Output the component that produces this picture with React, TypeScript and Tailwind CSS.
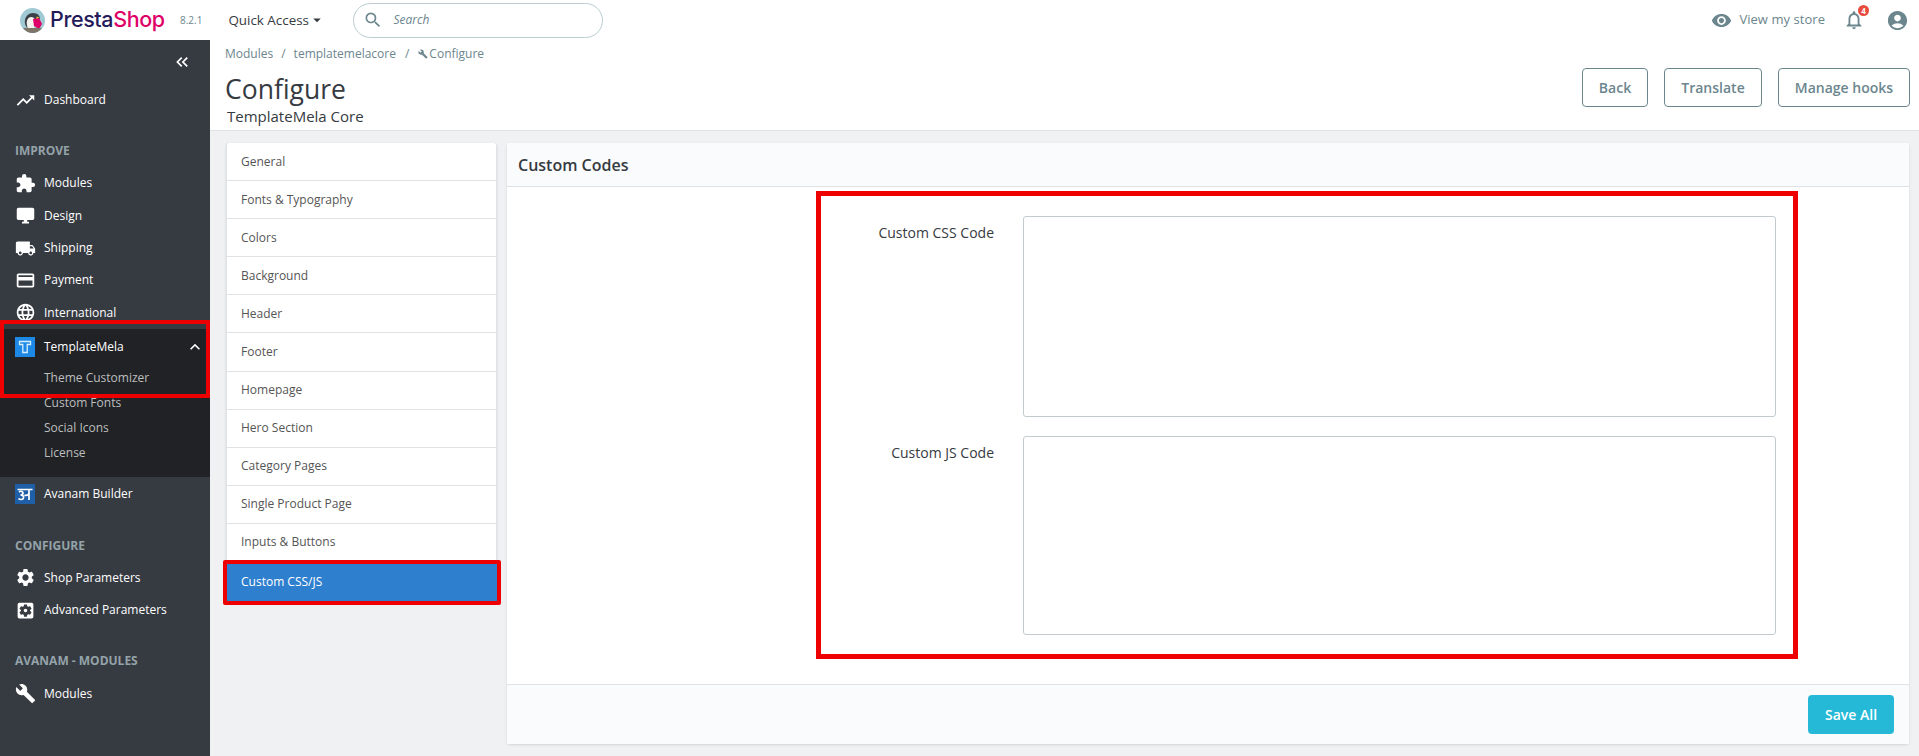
import {
  MdTrendingUp,
  MdExtension,
  MdDesktopWindows,
  MdLocalShipping,
  MdCreditCard,
  MdLanguage,
  MdKeyboardArrowUp,
  MdSettings,
  MdSettingsApplications,
  MdBuild,
  MdVisibility,
  MdNotificationsNone,
  MdAccountCircle,
  MdSearch,
  MdKeyboardDoubleArrowLeft,
  MdArrowDropDown,
} from "react-icons/md";
import type { ReactNode } from "react";

const font = { fontFamily: '"Open Sans", sans-serif' };

function NavItem({ icon, label }: { icon: ReactNode; label: string }) {
  return (
    <div className="flex h-[32.3px] items-center pl-[15px] text-[12px] text-white">
      <span className="flex w-[29px] shrink-0 items-center text-[21px] text-white">{icon}</span>
      {label}
    </div>
  );
}

function NavTitle({ label, className }: { label: string; className: string }) {
  return (
    <div className={`flex items-center pl-[15px] text-[12px] font-bold uppercase text-[#94a3a9] ${className}`}>
      {label}
    </div>
  );
}

function Logo() {
  return (
    <svg width="25" height="25" viewBox="0 0 25 25" className="shrink-0">
      <circle cx="12.5" cy="12.500" r="12.500" fill="#9fc9d3" />
      <path d="M5 16c-1-7 3-11 8-11s7 3 7 6l-4 2-3 9H8z" fill="#3b4048" />
      <path d="M7 17c-1-4 1-8 4-8s4 2 4 4l-1 10H8z" fill="#f4f2ee" />
      <path d="M13 11l6-1 3 6-3 5-5-3z" fill="#df0067" />
      <path d="M16.500 8.500l3 1-3 1.500z" fill="#f2b134" />
      <path d="M3 20h19c-2 3-6 5-9.500 5S5 23 3 20z" fill="#7d7568" />
    </svg>
  );
}

function Topbar() {
  return (
    <header className="flex h-10 items-center bg-white pl-5 pr-[10px]">
      <Logo />
      <div
        className="w-[126px] pl-[5px] text-[21.5px] font-medium leading-none tracking-[-0.4px]"
        style={{ fontFamily: '"Inter", sans-serif' }}
      >
        <span className="text-[#251b5b]">Presta</span>
        <span className="text-[#df0067]">Shop</span>
      </div>
      <span className="ml-[9px] text-[10px] text-[#6c868e]">8.2.1</span>
      <div className="ml-[26px] flex w-[125px] items-center text-[13.4px] text-[#363a41]">
        Quick Access
        <MdArrowDropDown className="-ml-[1px] text-[18px]" />
      </div>
      <div className="flex h-[35px] w-[250px] items-center rounded-full border border-[#bbcdd2] pl-[9px] text-[12px] italic text-[#6c868e]">
        <MdSearch className="text-[20px] text-[#6c868e]" />
        <span className="ml-[10px]">Search</span>
      </div>
      <div className="ml-auto flex items-center text-[#6c868e]">
        <MdVisibility className="text-[21px]" />
        <span className="ml-[7px] text-[13px] tracking-[0.05px]">View my store</span>
        <span className="relative ml-[18px] text-[22px]">
          <MdNotificationsNone />
          <span className="absolute -right-[4px] -top-[4px] flex h-[11px] w-[11px] items-center justify-center rounded-full bg-[#e74c3c] text-[8px] font-bold text-white">
            4
          </span>
        </span>
        <MdAccountCircle className="ml-[21px] text-[23px]" />
      </div>
    </header>
  );
}

function Sidebar() {
  return (
    <aside className="relative w-[210px] shrink-0 bg-[#363a41]">
      <div className="flex h-[44px] items-center justify-end pr-[18px] text-white">
        <MdKeyboardDoubleArrowLeft className="text-[20px]" />
      </div>
      <NavItem icon={<MdTrendingUp />} label="Dashboard" />
      <NavTitle label="Improve" className="mt-[20px] h-[30px]" />
      <div className="mt-[1px]">
        <NavItem icon={<MdExtension />} label="Modules" />
        <NavItem icon={<MdDesktopWindows />} label="Design" />
        <NavItem icon={<MdLocalShipping />} label="Shipping" />
        <NavItem icon={<MdCreditCard />} label="Payment" />
        <NavItem icon={<MdLanguage />} label="International" />
      </div>
      <div className="h-[148px] bg-[#202226]">
        <div className="flex h-[36px] items-center pl-[15px] text-[12px] text-white">
          <svg width="20" height="20" viewBox="0 0 20 20" className="mr-[9px] shrink-0">
            <rect width="20" height="20" fill="#1e88e5" />
            <path d="M4.500 4.500h11v3h-3.300v8H7.800v-8H4.500z" fill="none" stroke="#d7eeff" strokeWidth="1.300" />
          </svg>
          TemplateMela
          <MdKeyboardArrowUp className="ml-auto mr-[5px] text-[20px]" />
        </div>
        <div className="pl-[44px] text-[12px] text-[#bebebe]">
          <div className="flex h-[26px] items-center">Theme Customizer</div>
          <div className="flex h-[24.700px] items-center">Custom Fonts</div>
          <div className="flex h-[24.700px] items-center">Social Icons</div>
          <div className="flex h-[24.700px] items-center">License</div>
        </div>
      </div>
      <div className="flex h-[34px] items-center pl-[15px] pt-[1px] text-[12px] text-white">
        <svg width="20" height="20" viewBox="0 0 20 20" className="mr-[9px] shrink-0">
          <rect width="20" height="20" fill="#1f5fa8" />
          <path
            d="M2.500 5.500h15M4 8c2-1.500 4.500-.5 4 1.500-.2 1-1.500 1.500-2.500 1.500 2 0 3.500 1 3 3-.5 1.800-3.500 2-5 .5M14 5.500V16M9.500 11c2 1 3.500 0 4.500-1.500"
            fill="none"
            stroke="#fff"
            strokeWidth="1.700"
          />
        </svg>
        Avanam Builder
      </div>
      <NavTitle label="Configure" className="mt-[20px] h-[30px]" />
      <div className="mt-[1px]">
        <NavItem icon={<MdSettings />} label="Shop Parameters" />
        <NavItem icon={<MdSettingsApplications />} label="Advanced Parameters" />
      </div>
      <NavTitle label="Avanam - Modules" className="mt-[20px] h-[30px]" />
      <div className="mt-[1px]">
        <NavItem icon={<MdBuild />} label="Modules" />
      </div>
      {/* annotation */}
      <div className="pointer-events-none absolute left-0 top-[280px] h-[78px] w-[210px] rounded-[1px] border-4 border-[#ee0000]" />
    </aside>
  );
}

function PageHead() {
  return (
    <div className="flex h-[91px] items-start justify-between border-b border-[#dfe3e5] bg-white pl-[15px] pr-[9px]">
      <div>
        <div className="mt-[6px] flex items-center text-[12px] leading-4 text-[#6c868e]">
          Modules<span className="mx-[8px]">/</span>templatemelacore<span className="mx-[9px]">/</span>
          <MdBuild className="mr-[1px] text-[10px]" />
          Configure
        </div>
        <h1 className="mt-[8px] text-[26.500px] font-normal leading-[38px] text-[#363a41]">Configure</h1>
        <div className="ml-[2px] -mt-[1px] text-[15px] leading-[18px] text-[#363a41]">TemplateMela Core</div>
      </div>
      <div className="mt-[28px] flex gap-4 text-[14px] font-semibold text-[#6c868e]">
        <button className="h-[39px] w-[66px] rounded-[4px] border border-[#6c868e]">Back</button>
        <button className="h-[39px] w-[98px] rounded-[4px] border border-[#6c868e]">Translate</button>
        <button className="h-[39px] w-[132px] rounded-[4px] border border-[#6c868e]">Manage hooks</button>
      </div>
    </div>
  );
}

const tabs = [
  "General",
  "Fonts & Typography",
  "Colors",
  "Background",
  "Header",
  "Footer",
  "Homepage",
  "Hero Section",
  "Category Pages",
  "Single Product Page",
  "Inputs & Buttons",
];

function TabList() {
  return (
    <div className="relative w-[271px] shrink-0 self-start">
      <div className="overflow-hidden rounded-t-[3px] border-x border-[#dfe3e5] bg-white shadow-sm">
        {tabs.map((t) => (
          <div
            key={t}
            className="flex h-[38.100px] items-center border-b border-[#dfe3e5] pl-[14px] text-[12px] text-[#555]"
          >
            {t}
          </div>
        ))}
      </div>
      <div className="flex h-[39px] items-center bg-[#2f7fcf] pl-[15px] text-[12px] text-white">
        Custom CSS/JS
      </div>
      {/* annotation */}
      <div className="pointer-events-none absolute -left-[3px] top-[417px] h-[45px] w-[278px] rounded-[2px] border-4 border-[#ee0000]" />
    </div>
  );
}

function Field({ label, height }: { label: string; height: string }) {
  return (
    <div className="flex">
      <label className="w-[157px] pt-[7px] text-right text-[14px] leading-5 text-[#363a41]">{label}</label>
      <div className={`ml-[29px] w-[753px] rounded-[3px] border border-[#c3cbcf] bg-white ${height}`} />
    </div>
  );
}

function Panel() {
  return (
    <div className="flex h-[601px] flex-1 flex-col rounded-[3px] bg-white shadow-sm">
      <div className="flex h-[44px] items-center border-b border-[#dfe3e5] bg-[#fafbfc] pl-[11px] text-[16px] font-semibold text-[#363a41]">
        Custom Codes
      </div>
      <div className="flex-1 pl-[309px] pt-[4px]">
        <div className="flex h-[468px] w-[982px] flex-col gap-[19px] border-[5px] border-[#ee0000] pl-[16px] pt-[20px]">
          <Field label="Custom CSS Code" height="h-[201px]" />
          <Field label="Custom JS Code" height="h-[199px]" />
        </div>
      </div>
      <div className="flex h-[60px] items-center justify-end border-t border-[#dfe3e5] bg-[#fafbfc] pr-[15px]">
        <button className="h-[39px] w-[86px] rounded-[4px] bg-[#25b9d7] text-[14px] font-semibold text-white">
          Save All
        </button>
      </div>
    </div>
  );
}

export default function App() {
  return (
    <div className="flex h-[756px] flex-col overflow-hidden bg-[#eff1f2]" style={font}>
      <Topbar />
      <div className="flex min-h-0 flex-1">
        <Sidebar />
        <main className="min-w-0 flex-1">
          <PageHead />
          <div className="flex gap-[10px] pl-4 pr-[10px] pt-[12px]">
            <TabList />
            <Panel />
          </div>
        </main>
      </div>
    </div>
  );
}
